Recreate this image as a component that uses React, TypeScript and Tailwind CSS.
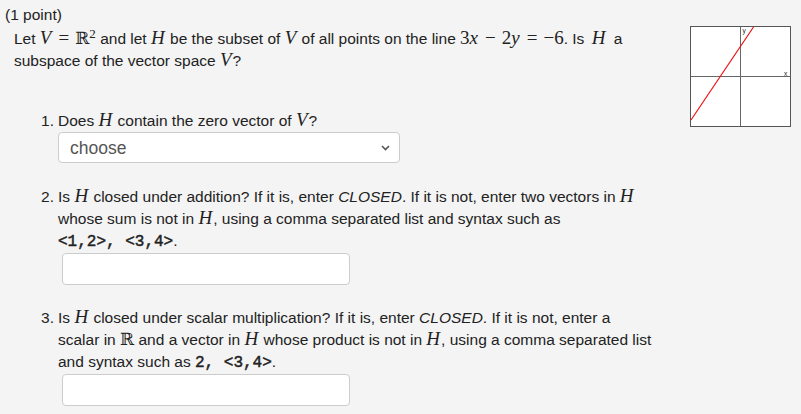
import React from 'react';

const M = ({ children }: { children: React.ReactNode }) => (
    <span className="pr-[1px] font-['Liberation_Serif',serif] text-[19px] leading-none italic">{children}</span>
);

const N = ({ children }: { children: React.ReactNode }) => (
    <span className="font-['Liberation_Serif',serif] text-[19px] leading-none">{children}</span>
);

const Op = ({ children }: { children: React.ReactNode }) => (
    <span className="mx-[6px] font-['Liberation_Serif',serif] text-[19px] leading-none">{children}</span>
);

const Reals = () => <span className="font-['DejaVu_Serif',serif] text-[17px] leading-none">ℝ</span>;

const Code = ({ children }: { children: React.ReactNode }) => (
    <span className="font-['Liberation_Mono',monospace] text-[16px] leading-none [-webkit-text-stroke:0.45px_#222]">
        {children}
    </span>
);

function Graph() {
    return (
        <svg width="101" height="101" viewBox="0 0 101 101" className="block">
            <rect x="0.5" y="0.5" width="100" height="100" fill="#fff" stroke="#555" />
            <line x1="50.5" y1="1" x2="50.5" y2="100" stroke="#666" />
            <line x1="1" y1="50.5" x2="100" y2="50.5" stroke="#666" />
            <line x1="1" y1="94" x2="63.5" y2="1" stroke="#ee1111" strokeWidth="1.2" />
            <text x="52.5" y="7" fontSize="6.5" fontFamily="Liberation Sans, sans-serif" fill="#222">y</text>
            <text x="94" y="50" fontSize="6.5" fontFamily="Liberation Sans, sans-serif" fill="#222">x</text>
        </svg>
    );
}

function Item({ n, children }: { n: number; children: React.ReactNode }) {
    return (
        <div className="flex">
            <div className="w-[17px] shrink-0">{n}.</div>
            <div className="flex-1">{children}</div>
        </div>
    );
}

function AnswerBox() {
    return <div className="ml-[4px] mt-[1px] h-[32px] w-[288px] rounded-[4px] border border-[#cccccc] bg-white" />;
}

export default function App() {
    return (
        <div className="min-h-[414px] w-[801px] bg-[#f4f4f4] font-['Liberation_Sans',Arial,sans-serif] text-[15.5px] leading-[22px] text-[#222]">
            <div className="flex">
                <div className="flex-1 pl-[5px] pt-[4px]">
                    <div>(1 point)</div>
                    <p className="mt-[2px] pl-[9px]">
                        Let <M>V</M>
                        <Op>=</Op>
                        <Reals />
                        <sup className="font-['Liberation_Serif',serif] text-[13px]">2</sup> and let <M>H</M> be the
                        subset of <M>V</M> of all points on the line <N>3</N>
                        <M>x</M>
                        <Op>−</Op>
                        <N>2</N>
                        <M>y</M>
                        <Op>=</Op>
                        <N>−6</N>. Is <span className="mx-[3px]"><M>H</M></span> a
                        <br />
                        subspace of the vector space <M>V</M>?
                    </p>

                    <div className="mt-[38px] flex flex-col pl-[36px]">
                        <Item n={1}>
                            <div>
                                Does <M>H</M> contain the zero vector of <M>V</M>?
                            </div>
                            <div className="flex h-[31px] w-[342px] items-center justify-between rounded-[4px] border border-[#cccccc] bg-white pl-[11px] pr-[9px] text-[17.5px] text-[#555]">
                                <span>choose</span>
                                <svg width="9" height="6" viewBox="0 0 9 6">
                                    <path d="M1 1l3.5 3.5L8 1" fill="none" stroke="#555" strokeWidth="1.6" />
                                </svg>
                            </div>
                        </Item>

                        <div className="mt-[23px]">
                            <Item n={2}>
                                <div>
                                    Is <M>H</M> closed under addition? If it is, enter <i>CLOSED</i>. If it is not, enter
                                    two vectors in <M>H</M>
                                    <br />
                                    whose sum is not in <M>H</M>, using a comma separated list and syntax such as
                                    <br />
                                    <Code>&lt;1,2&gt;, &lt;3,4&gt;</Code>.
                                </div>
                                <AnswerBox />
                            </Item>
                        </div>

                        <div className="mt-[22px]">
                            <Item n={3}>
                                <div>
                                    Is <M>H</M> closed under scalar multiplication? If it is, enter <i>CLOSED</i>. If it
                                    is not, enter a
                                    <br />
                                    scalar in <Reals /> and a vector in <M>H</M> whose product is not in <M>H</M>, using a
                                    comma separated list
                                    <br />
                                    and syntax such as <Code>2, &lt;3,4&gt;</Code>.
                                </div>
                                <AnswerBox />
                            </Item>
                        </div>
                    </div>
                </div>
                <div className="mr-[10px] mt-[26px] shrink-0">
                    <Graph />
                </div>
            </div>
        </div>
    );
}
